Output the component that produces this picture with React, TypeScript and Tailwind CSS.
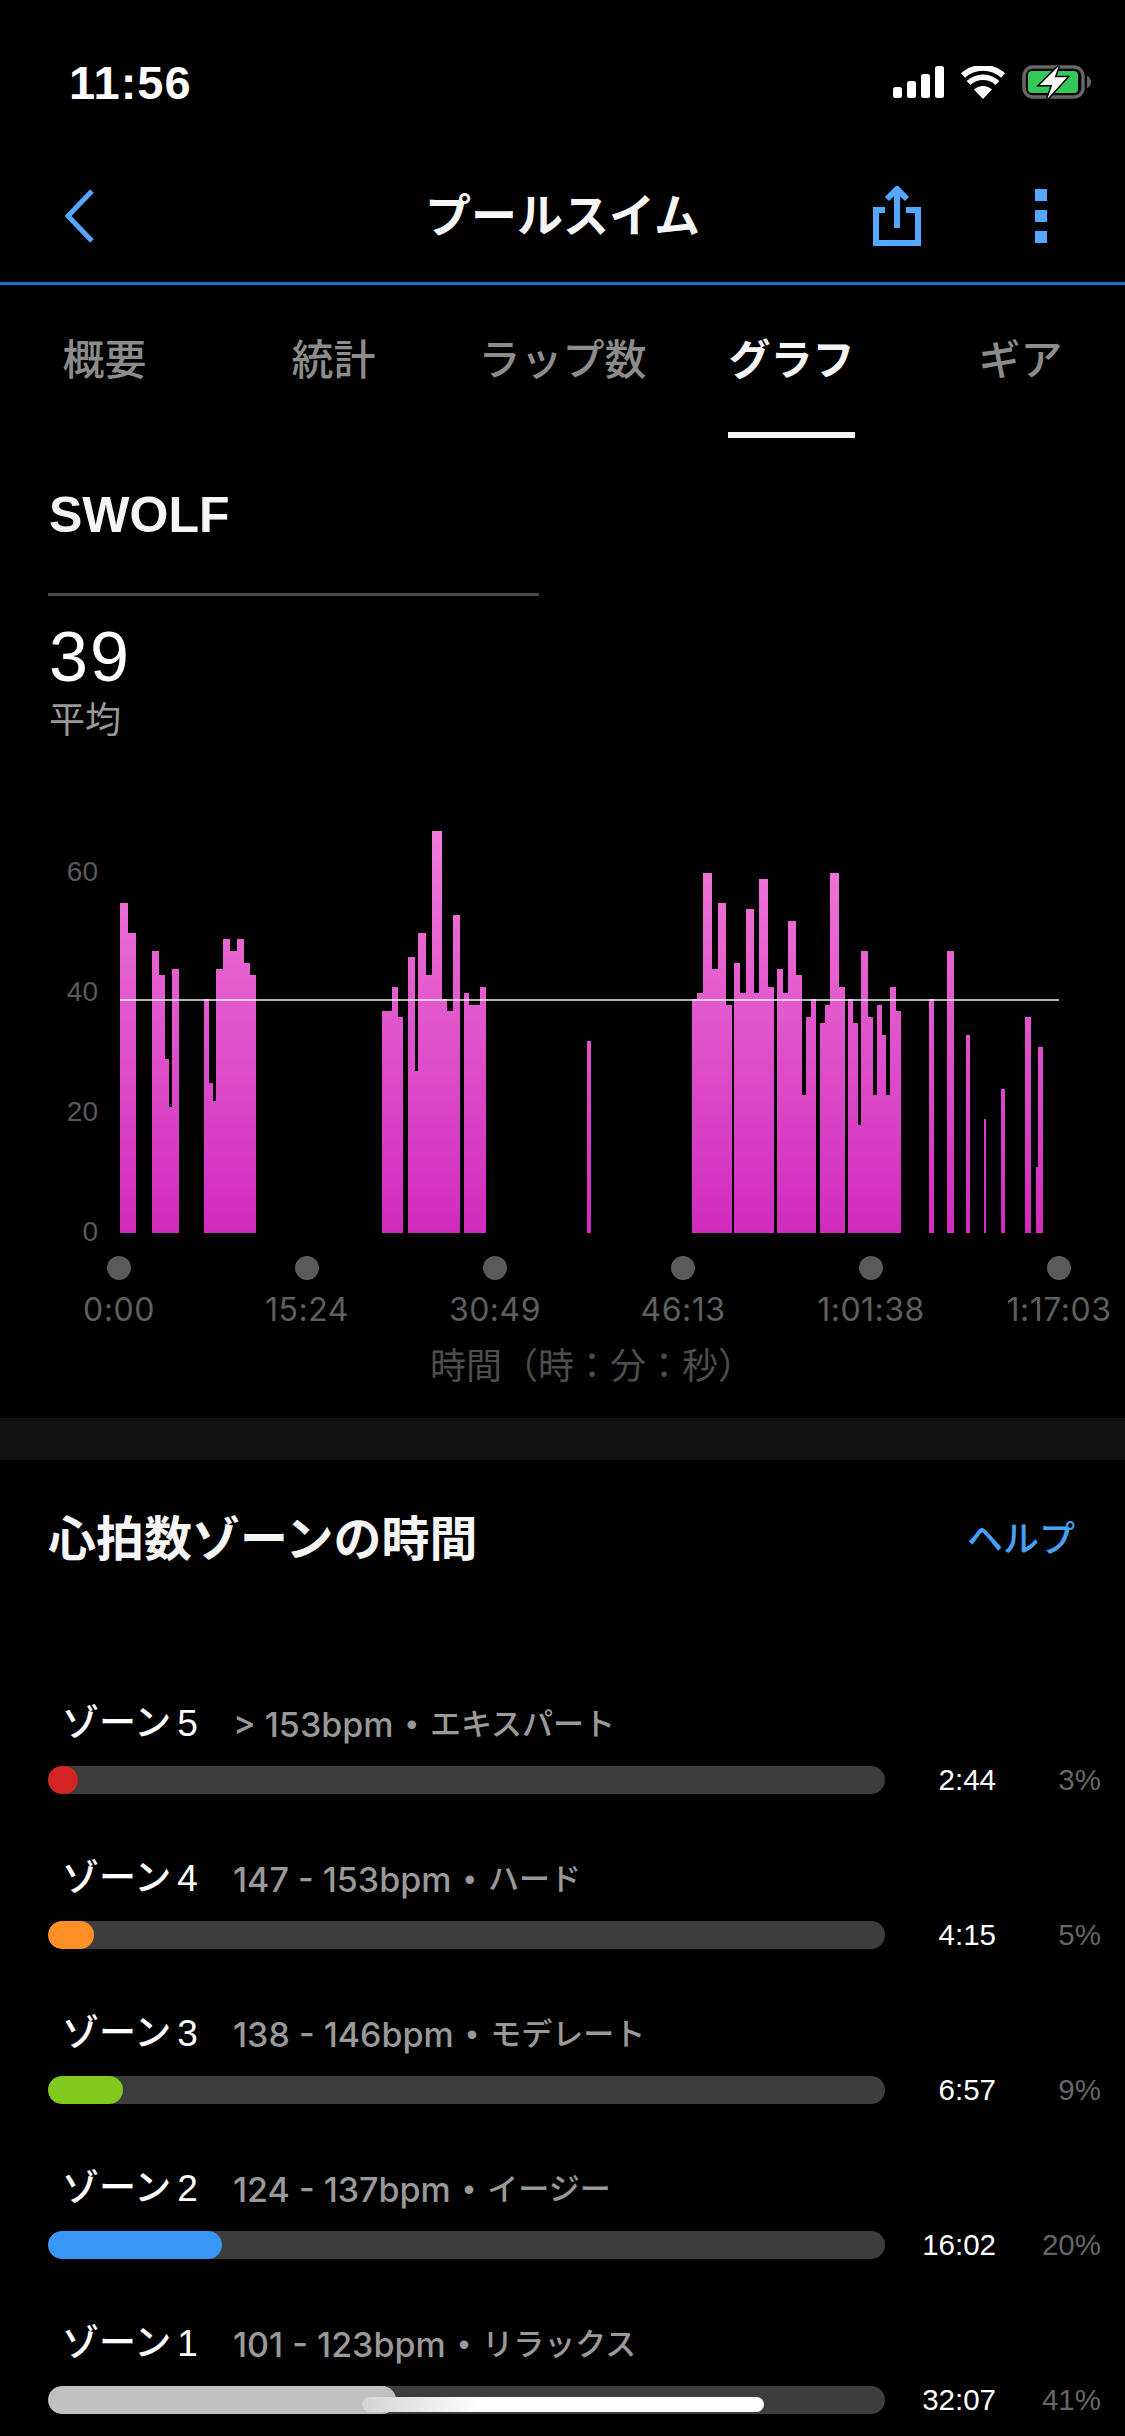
const bars: Array<[number, number, number]> = [
  [120, 128, 55], [128, 136, 50],
  [152, 159, 47], [159, 165, 43], [165, 169, 29], [169, 172, 21], [172, 179, 44],
  [204, 209, 39], [209, 213, 25], [213, 216, 22], [216, 223, 44], [223, 230, 49], [230, 237, 47], [237, 244, 49], [244, 250, 45], [250, 256, 43],
  [382, 392, 37], [392, 398, 41], [398, 403, 36],
  [408, 415, 46], [415, 418, 27], [418, 426, 50], [426, 432, 43], [432, 442, 67], [442, 447, 39], [447, 453, 37], [453, 460, 53],
  [464, 469, 40], [469, 480, 38], [480, 486, 41],
  [587, 591, 32],
  [692, 697, 39], [697, 703, 40], [703, 712, 60], [712, 718, 44], [718, 726, 55], [726, 732, 38],
  [734, 740, 45], [740, 746, 40], [746, 754, 54], [754, 759, 40], [759, 768, 59], [768, 774, 41],
  [777, 783, 44], [783, 788, 40], [788, 796, 52], [796, 802, 43], [802, 806, 23], [806, 811, 36], [811, 816, 39],
  [820, 825, 35], [825, 830, 38], [830, 839, 60], [839, 845, 41],
  [848, 853, 39], [853, 858, 35], [858, 861, 18], [861, 868, 47], [868, 873, 36], [873, 877, 23], [877, 882, 38], [882, 886, 33], [886, 890, 23], [890, 896, 41], [896, 901, 37],
  [929, 934, 39],
  [947, 954, 47],
  [966, 970, 33],
  [984, 986, 19],
  [1001, 1005, 24],
  [1025, 1031, 36],
  [1036, 1038, 11], [1038, 1043, 31],
];

const ticks = ["0:00", "15:24", "30:49", "46:13", "1:01:38", "1:17:03"];

const zones = [
  { name: "ゾーン", num: "5", range: "> 153bpm", level: "エキスパート", time: "2:44", pct: "3%", fill: "w-[30px] bg-[#d42323]" },
  { name: "ゾーン", num: "4", range: "147 - 153bpm", level: "ハード", time: "4:15", pct: "5%", fill: "w-[46px] bg-[#ff8f26]" },
  { name: "ゾーン", num: "3", range: "138 - 146bpm", level: "モデレート", time: "6:57", pct: "9%", fill: "w-[75px] bg-[#82c91e]" },
  { name: "ゾーン", num: "2", range: "124 - 137bpm", level: "イージー", time: "16:02", pct: "20%", fill: "w-[174px] bg-[#3a96f5]" },
  { name: "ゾーン", num: "1", range: "101 - 123bpm", level: "リラックス", time: "32:07", pct: "41%", fill: "w-[348px] bg-[#c0c0c0]" },
];

function StatusIcons() {
  return (
    <div className="flex items-center gap-[16px]">
      <svg width="51" height="32" viewBox="0 0 51 32" fill="#fff">
        <rect x="0" y="21" width="9" height="11" rx="2.5" />
        <rect x="14" y="15" width="9" height="17" rx="2.5" />
        <rect x="28" y="8" width="9" height="24" rx="2.5" />
        <rect x="42" y="0" width="9" height="32" rx="2.5" />
      </svg>
      <svg width="46" height="33" viewBox="0 0 46 33">
        <path d="M23 33 L14 23.5 A13 13 0 0 1 32 23.5 Z" fill="#fff" />
        <path d="M8.5 17 A21 21 0 0 1 37.5 17" fill="none" stroke="#fff" strokeWidth="5.5" />
        <path d="M3 9.5 A30 30 0 0 1 43 9.5" fill="none" stroke="#fff" strokeWidth="6" />
      </svg>
      <svg width="69" height="35" viewBox="0 0 69 35">
        <rect x="2" y="2" width="59" height="30" rx="9" fill="none" stroke="#666" strokeWidth="3.5" />
        <rect x="6" y="6" width="50" height="22" rx="4" fill="#34c759" />
        <path d="M65 11 C68 12 69 15 69 17 C69 19 68 22 65 23 Z" fill="#666" />
        <path
          d="M36.7 1 L17.7 20 H30.3 L25.3 34 L45 12.3 H32.7 Z"
          fill="#fff"
          stroke="#000"
          strokeWidth="3"
          paintOrder="stroke"
        />
      </svg>
    </div>
  );
}

function BackIcon() {
  return (
    <svg width="30" height="54" viewBox="0 0 30 54" fill="none" stroke="#55a8ff" strokeWidth="5">
      <path d="M27 2 L3 27 L27 52" />
    </svg>
  );
}

function ShareIcon() {
  return (
    <svg width="48" height="60" viewBox="0 0 48 60" fill="none" stroke="#55a8ff" strokeWidth="6">
      <path d="M12 24 H3 V57 H45 V24 H33" />
      <path d="M24 4 V42" />
      <path d="M14 13 L24 3 L34 13" />
    </svg>
  );
}

function SwolfChart() {
  return (
    <svg width="1027" height="453" viewBox="98 780 1027 453" className="block">
      <defs>
        <linearGradient id="bar" gradientUnits="userSpaceOnUse" x1="0" y1="831" x2="0" y2="1233">
          <stop offset="0" stopColor="#f07cd9" />
          <stop offset="1" stopColor="#d02bbd" />
        </linearGradient>
      </defs>
      {bars.map(([x0, x1, value]) => (
        <rect key={x0} x={x0} y={1233 - value * 6} width={x1 - x0} height={value * 6} fill="url(#bar)" />
      ))}
      <rect x="120" y="999" width="939" height="2" fill="#fff" fillOpacity="0.7" />
    </svg>
  );
}

export default function App() {
  return (
    <div className="relative h-[2436px] w-[1125px] overflow-hidden bg-black font-['Liberation_Sans','Noto_Sans_CJK_JP',sans-serif] text-white">
      <div className="flex h-[164px] items-center justify-between pl-[69px] pr-[34px]">
        <span className="text-[47px] leading-none tracking-[1px] font-bold">11:56</span>
        <StatusIcons />
      </div>

      <div className="flex h-[104px] items-center pl-[65px]">
        <BackIcon />
        <h1 className="ml-[330px] w-[273px] text-center text-[46px] leading-[60px] font-bold whitespace-nowrap text-[#f5f5f5]">
          プールスイム
        </h1>
        <div className="ml-[175px]">
          <ShareIcon />
        </div>
        <div className="ml-[114px] flex flex-col gap-[9px]">
          <span className="h-[12px] w-[12px] bg-[#55a8ff]" />
          <span className="h-[12px] w-[12px] bg-[#55a8ff]" />
          <span className="h-[12px] w-[12px] bg-[#55a8ff]" />
        </div>
      </div>
      <div className="mt-[14px] h-[3px] bg-[#1a6dd0]" />

      <div className="-ml-[10px] grid w-[1145px] grid-cols-5 pt-[46px]">
        {["概要", "統計", "ラップ数", "グラフ", "ギア"].map((tab) => (
          <div key={tab} className="flex flex-col items-center">
            <span
              className={`text-[42px] leading-[60px] whitespace-nowrap ${
                tab === "グラフ" ? "font-bold text-[#f5f5f5]" : "font-medium text-[#8c8c8c]"
              }`}
            >
              {tab}
            </span>
            <span className={`mt-[41px] h-[6px] w-[127px] ${tab === "グラフ" ? "bg-[#f2f2f2]" : ""}`} />
          </div>
        ))}
      </div>

      <div className="mt-[47px] pl-[49px] text-[50px] leading-[60px] font-bold text-[#f5f5f5]">SWOLF</div>
      <div className="mt-[48px] ml-[48px] h-[3px] w-[491px] bg-[#4a4a4a]" />
      <div className="mt-[21px] pl-[49px] text-[70px] leading-[80px] tracking-[2px]">39</div>
      <div className="mt-[2px] pl-[49px] text-[36px] leading-[44px] text-[#999999]">平均</div>

      <div className="mt-[37px] flex">
        <div className="mt-[72px] flex h-[400px] w-[98px] flex-col justify-between text-right text-[28px] leading-[40px] text-[#5a5a5a]">
          <span>60</span>
          <span>40</span>
          <span>20</span>
          <span>0</span>
        </div>
        <SwolfChart />
      </div>

      <div className="-mt-[19px] ml-[25px] grid w-[1128px] grid-cols-6 text-center">
        {ticks.map((tick) => (
          <div key={tick} className="flex flex-col items-center">
            <span className="mt-[23px] h-[24px] w-[24px] rounded-full bg-[#5a5a5a]" />
            <span className="mt-[10px] font-['Inter',sans-serif] text-[32px] leading-[40px] tracking-[0.5px] text-[#5f5f5f]">{tick}</span>
          </div>
        ))}
      </div>
      <div className="mt-[12px] ml-[112px] w-[960px] text-center text-[36px] leading-[50px] text-[#4d4d4d]">
        時間（時：分：秒）
      </div>

      <div className="mt-[26px] h-[42px] bg-[#111111]" />

      <div className="mt-[50px] flex items-center justify-between pr-[50px] pl-[48px]">
        <h2 className="text-[48px] leading-[60px] font-bold text-[#f5f5f5]">心拍数ゾーンの時間</h2>
        <span className="text-[36px] leading-[50px] font-medium text-[#47a0f5]">ヘルプ</span>
      </div>

      <div className="mt-[132px] flex flex-col gap-[63px]">
        {zones.map((zone) => (
          <div key={zone.num}>
            <div className="flex h-[44px] items-center whitespace-nowrap">
              <span className="ml-[62px] w-[171px] text-[37px] leading-[44px] font-medium">
                {zone.name}
                <span className="ml-[6px]">{zone.num}</span>
              </span>
              <span className="pt-[1px] font-['Inter',sans-serif] text-[34px] leading-[44px] font-medium text-[#999999]">{zone.range}</span>
              <span className="mx-[13px] pt-[1px] text-[30px] leading-[44px] font-bold text-[#999999]">•</span>
              <span className="pt-[1px] text-[31px] leading-[44px] font-medium text-[#999999]">{zone.level}</span>
            </div>
            <div className="mt-[20px] flex h-[28px] items-center text-[29.5px] leading-[28px]">
              <div className="ml-[48px] h-[28px] w-[837px] overflow-hidden rounded-full bg-[#3d3d3d]">
                <div className={`h-full rounded-full ${zone.fill}`} />
              </div>
              <span className="w-[111px] text-right">{zone.time}</span>
              <span className="w-[105px] text-right text-[#666666]">{zone.pct}</span>
            </div>
          </div>
        ))}
      </div>

      <div className="absolute top-[2397px] left-[362px] h-[15px] w-[402px] rounded-full bg-gradient-to-r from-[#d4d4d4] from-0% to-white to-30%" />
    </div>
  );
}
